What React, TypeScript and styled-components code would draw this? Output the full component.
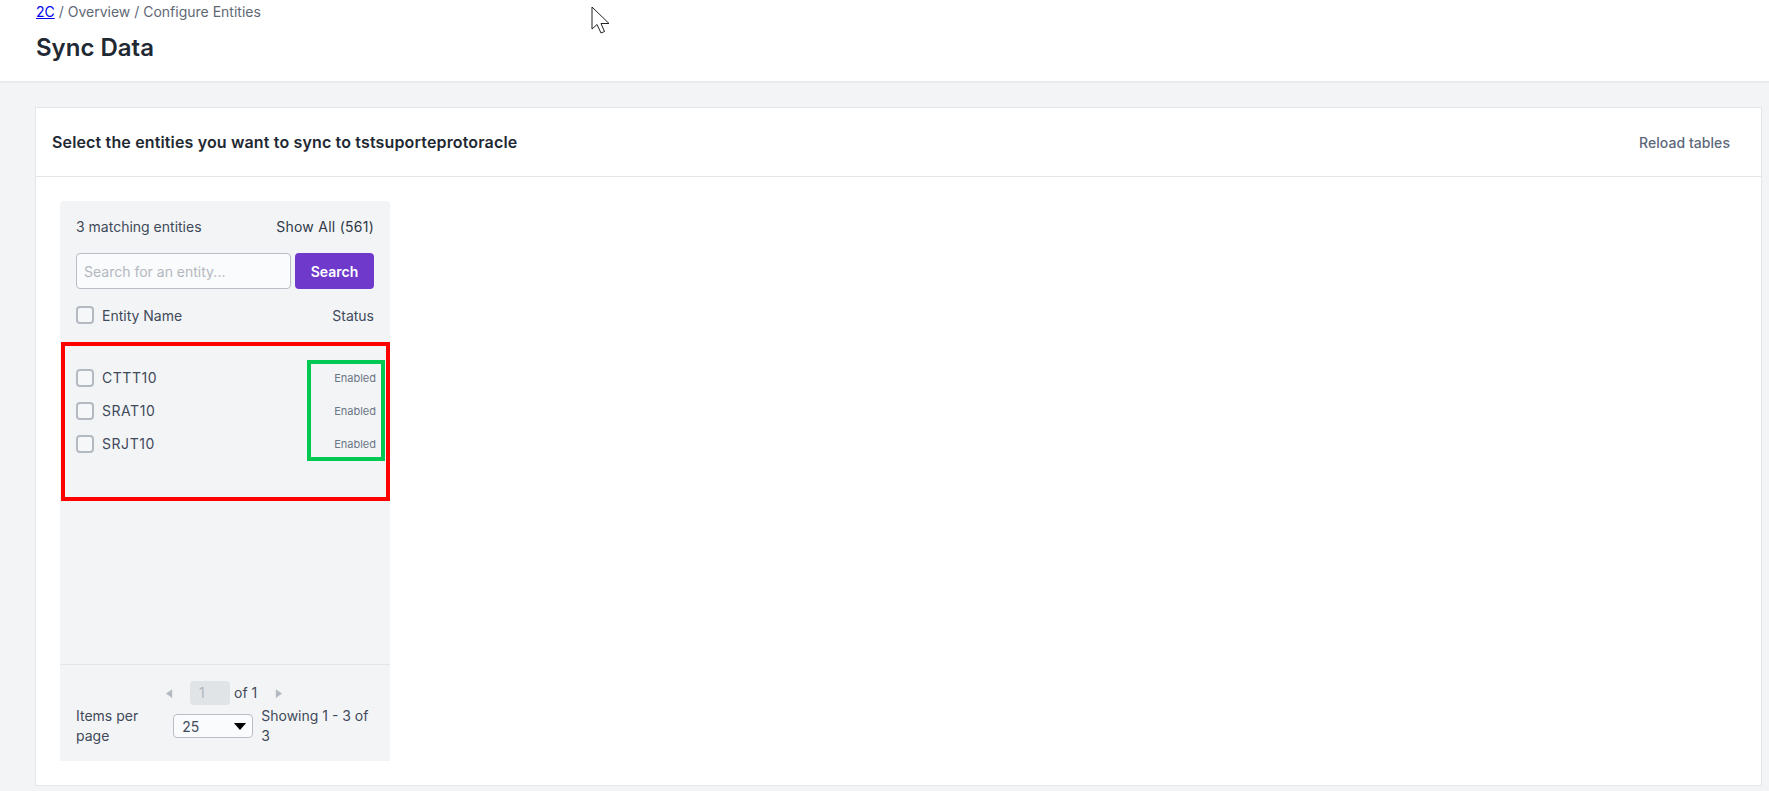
import styled, {createGlobalStyle} from "styled-components";

const entities = ["CTTT10", "SRAT10", "SRJT10"]

export default function App() {
    return (
        <>
            <GlobalStyle/>
            <PageHeader>
                <Breadcrumb>
                    <a href="#">2C</a> / Overview / Configure Entities
                </Breadcrumb>
                <Title>Sync Data</Title>
                <Cursor viewBox="0 0 20 28" aria-hidden="true">
                    <path d="M1 1 L1 23 L6 18.5 L10 27 L13.5 25.5 L10 17.5 L18 17.5 Z" fill="#fff" stroke="#222" strokeWidth="1"/>
                </Cursor>
            </PageHeader>
            <Content>
                <Card>
                    <CardHeader>
                        <CardTitle>Select the entities you want to sync to tstsuporteprotoracle</CardTitle>
                        <ReloadButton>Reload tables</ReloadButton>
                    </CardHeader>
                    <CardBody>
                        <Panel>
                            <PanelTop>
                                <SummaryRow>
                                    <span>3 matching entities</span>
                                    <ShowAll>Show All (561)</ShowAll>
                                </SummaryRow>
                                <SearchRow>
                                    <SearchInput placeholder="Search for an entity..."/>
                                    <SearchButton>Search</SearchButton>
                                </SearchRow>
                                <ListHeader>
                                    <CheckLabel>
                                        <Checkbox/>
                                        Entity Name
                                    </CheckLabel>
                                    <span>Status</span>
                                </ListHeader>
                            </PanelTop>
                            <EntityList>
                                {entities.map(name =>
                                    <EntityRow key={name}>
                                        <CheckLabel>
                                            <Checkbox/>
                                            <EntityName>{name}</EntityName>
                                        </CheckLabel>
                                        <StatusText>Enabled</StatusText>
                                    </EntityRow>)}
                                <RedMark/>
                                <GreenMark/>
                            </EntityList>
                            <PanelFooter>
                                <Pager>
                                    <PagerArrow viewBox="0 0 8 10"><path d="M7 0 V10 L0 5 Z"/></PagerArrow>
                                    <PageBox>1</PageBox>
                                    <span>of 1</span>
                                    <PagerArrow viewBox="0 0 8 10"><path d="M1 0 V10 L8 5 Z"/></PagerArrow>
                                </Pager>
                                <FooterRow>
                                    <ItemsLabel>Items per page</ItemsLabel>
                                    <PageSize>
                                        25
                                        <SelectCaret viewBox="0 0 14 8"><path d="M0 0 H14 L7 8 Z"/></SelectCaret>
                                    </PageSize>
                                    <Showing>Showing 1 - 3 of 3</Showing>
                                </FooterRow>
                            </PanelFooter>
                        </Panel>
                    </CardBody>
                </Card>
            </Content>
        </>
    )
}

const GlobalStyle = createGlobalStyle`
  html, body {
    margin: 0;
    height: 100%;
    overflow: hidden;
    background: #f3f4f6;
    font-family: Inter, "Liberation Sans", sans-serif;
    color: #3f4a5a;
  }

  * {
    box-sizing: border-box;
  }
`

const PageHeader = styled.header`
  position: relative;
  height: 83px;
  padding: 3px 36px 0;
  background: #fff;
  border-bottom: 2px solid #e8eaed;
`

const Breadcrumb = styled.div`
  font-size: 14px;
  line-height: 17px;
  color: #5f6875;

  a {
    color: #0000ee;
  }
`

const Title = styled.h1`
  margin: 13px 0 0;
  font-size: 24px;
  line-height: 30px;
  font-weight: 600;
  color: #1f2933;
`

const Cursor = styled.svg`
  position: absolute;
  left: 591px;
  top: 6px;
  width: 20px;
  height: 28px;
`

const Content = styled.main`
  padding: 24px 7px 0 35px;
`

const Card = styled.section`
  height: 679px;
  background: #fff;
  border: 1px solid #e3e5e8;
`

const CardHeader = styled.div`
  display: flex;
  justify-content: space-between;
  align-items: center;
  height: 69px;
  padding: 0 31px 0 16px;
  border-bottom: 1px solid #e3e5e8;
`

const CardTitle = styled.h2`
  margin: 0;
  font-size: 16px;
  font-weight: 600;
  letter-spacing: 0.15px;
  color: #1f2933;
`

const ReloadButton = styled.span`
  font-size: 14px;
  font-weight: 500;
  letter-spacing: 0.05px;
  color: #5c677a;
`

const CardBody = styled.div`
  padding: 24px 24px 0;
`

const Panel = styled.div`
  display: flex;
  flex-direction: column;
  width: 330px;
  height: 560px;
  background: #f3f4f6;
  border-radius: 4px 4px 0 0;
  font-size: 14px;
`

const PanelTop = styled.div`
  padding: 15px 16px 0;
`

const SummaryRow = styled.div`
  display: flex;
  justify-content: space-between;
  line-height: 22px;
`

const ShowAll = styled.span`
  letter-spacing: 0.25px;
  color: #2f3947;
`

const SearchRow = styled.div`
  display: flex;
  gap: 4px;
  margin-top: 15px;
`

const SearchInput = styled.input`
  width: 215px;
  height: 36px;
  padding: 0 7px;
  border: 1px solid #b8bec6;
  border-radius: 4px;
  background: #fafbfc;
  font: 14px Inter, "Liberation Sans", sans-serif;

  &::placeholder {
    color: #b3b8c0;
  }
`

const SearchButton = styled.button`
  width: 79px;
  height: 36px;
  border: 0;
  border-radius: 4px;
  background: #6f3acb;
  color: #fff;
  font: 600 14px Inter, "Liberation Sans", sans-serif;
`

const ListHeader = styled.div`
  display: flex;
  justify-content: space-between;
  align-items: center;
  margin-top: 17px;
  height: 18px;
`

const CheckLabel = styled.label`
  display: flex;
  align-items: center;
  gap: 8px;
`

const Checkbox = styled.span`
  width: 18px;
  height: 18px;
  border: 2px solid #b4bac2;
  border-radius: 4px;
  background: #f6f7f9;
`

const EntityName = styled.span`
  letter-spacing: 0.55px;
`

const EntityList = styled.div`
  position: relative;
  flex: 1;
  margin-top: 23px;
  padding: 14px 14px 0 16px;
`

const EntityRow = styled.div`
  display: flex;
  justify-content: space-between;
  align-items: center;
  height: 33px;
`

const StatusText = styled.span`
  font-size: 11px;
  color: #6b7686;
`

const RedMark = styled.div`
  position: absolute;
  left: 1px;
  top: -5px;
  width: 329px;
  height: 159px;
  border: 4px solid #ff0000;
`

const GreenMark = styled.div`
  position: absolute;
  left: 247px;
  top: 13px;
  width: 78px;
  height: 101px;
  border: 4px solid #00c853;
`

const PanelFooter = styled.div`
  padding: 16px 16px 0;
  height: 97px;
  border-top: 1px solid #e3e5e8;
`

const Pager = styled.div`
  display: flex;
  align-items: center;
  height: 24px;
  padding-left: 90px;
  line-height: 24px;
`

const PagerArrow = styled.svg`
  width: 7px;
  height: 9px;
  fill: #b4bac2;

  &:first-child {
    margin-right: 17px;
  }

  &:last-child {
    margin-left: 18px;
  }
`

const PageBox = styled.span`
  width: 40px;
  height: 24px;
  margin-right: 4px;
  padding-left: 9px;
  border-radius: 4px;
  background: #e1e4e7;
  color: #b0b5bc;
`

const FooterRow = styled.div`
  display: flex;
  align-items: center;
  margin-top: 1px;
`

const ItemsLabel = styled.div`
  width: 98px;
  margin-right: 5px;
  line-height: 20px;
`

const PageSize = styled.div`
  display: flex;
  justify-content: space-between;
  align-items: center;
  flex: none;
  width: 80px;
  height: 24px;
  padding: 0 5px 0 8px;
  border: 1px solid #b8bec6;
  border-radius: 4px;
  background: #fafbfc;
`

const SelectCaret = styled.svg`
  width: 14px;
  height: 7px;
  fill: #000;
`

const Showing = styled.div`
  margin-left: 8px;
  line-height: 20px;
`
